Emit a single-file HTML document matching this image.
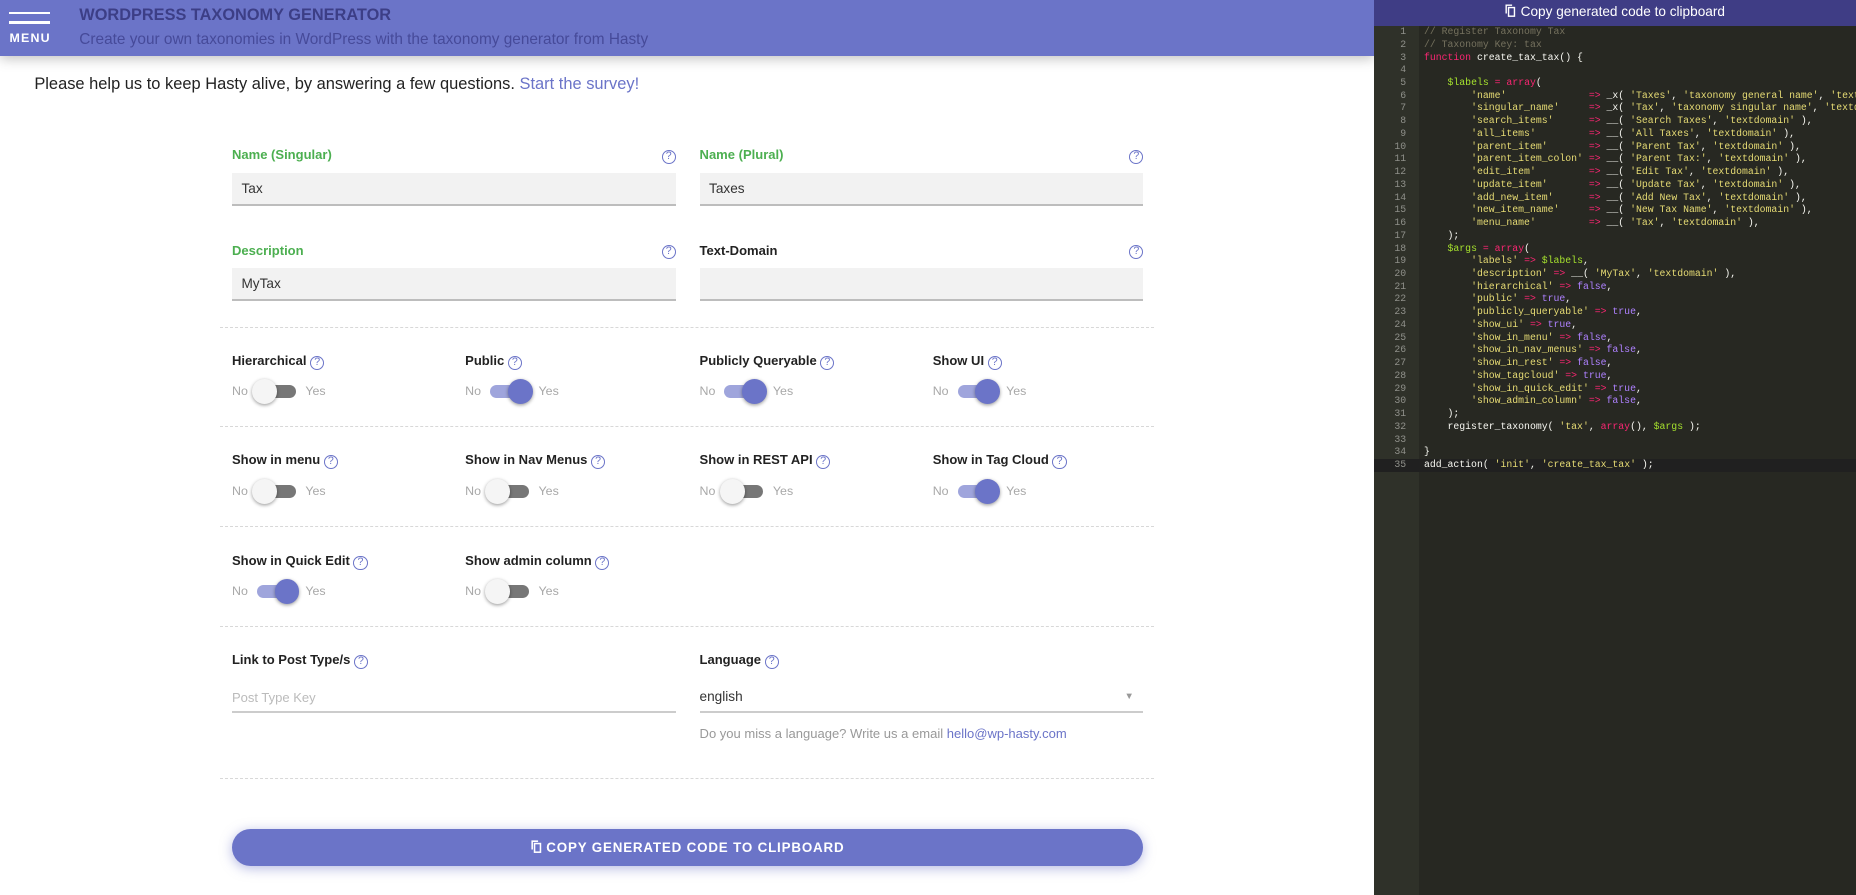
<!DOCTYPE html>
<html><head><meta charset="utf-8">
<style>
*{box-sizing:border-box;margin:0;padding:0}
html,body{width:1856px;height:895px;overflow:hidden;background:#fff}
#w{zoom:1.18367;width:1568px;height:756px;position:relative;font-family:"Liberation Sans",Arial,sans-serif;overflow:hidden}
.abs{position:absolute}
.hdr{left:0;top:0;width:1161px;height:47px;background:#6b74c8;box-shadow:0 2px 10px rgba(0,0,0,.25)}
.hb{left:8px;width:34px;height:2px;background:#fff}
.lbl{position:absolute;font-size:11px;font-weight:bold;color:#222;white-space:nowrap}
.g{color:#4caf50}
.q{display:inline-block;width:12px;height:12px;border:1px solid #6b74c8;border-radius:50%;color:#6b74c8;font-size:9px;line-height:10px;text-align:center;font-weight:normal;vertical-align:0px;margin-left:3px}
.inp{position:absolute;height:28px;background:#f2f2f2;border-bottom:2px solid #bdbdbd;font-size:11.5px;color:#333;padding:7px 8px}
.dash{position:absolute;left:186px;width:789px;border-top:1px dashed #d8d8d8}
.tg{position:absolute;font-size:10.5px;color:#a8a8a8;height:20px}
.tg .no{position:absolute;left:0;top:4px}
.tg .ye{position:absolute;left:62px;top:4px}
.tg .tr{position:absolute;left:21px;top:5px;width:33px;height:11px;border-radius:6px;background:#777}
.tg .kn{position:absolute;top:0;width:21px;height:21px;border-radius:50%;box-shadow:0 1px 3px rgba(0,0,0,.4)}
.off .kn{left:17px;background:#f5f5f5}
.on .tr{background:#9fa5dc}
.on .kn{left:36px;background:#6b74c8}
.code{left:1161px;top:0;width:407px;height:756px;background:#272822}
.gut{left:1161px;top:22px;width:38px;height:734px;background:#2f3129}
pre{position:absolute;left:1203px;top:22px;font-family:"Liberation Mono",monospace;font-size:8.3px;line-height:10.76px;color:#f8f8f2;white-space:pre}
.c{color:#75715e}.k{color:#f92672}.s{color:#e6db74}.v{color:#a6e22e}.p{color:#ae81ff}
</style></head><body><div id="w">
<div class="abs hdr"></div>
<div class="abs hb" style="top:10px"></div>
<div class="abs hb" style="top:18px"></div>
<div class="abs" style="left:8px;top:26px;font-size:10.5px;color:#fff;font-weight:bold;letter-spacing:1px">MENU</div>
<div class="abs" style="left:67px;top:5px;font-size:13.8px;font-weight:bold;color:#3c3e86">WORDPRESS TAXONOMY GENERATOR</div>
<div class="abs" style="left:67px;top:26px;font-size:13px;color:#464a99">Create your own taxonomies in WordPress with the taxonomy generator from Hasty</div>
<div class="abs" style="left:29px;top:63px;font-size:13.9px;color:#222">Please help us to keep Hasty alive, by answering a few questions. <span style="color:#6b74c8">Start the survey!</span></div>

<div class="lbl g" style="left:196px;top:124px">Name (Singular)</div><div class="abs" style="left:556px;top:121px"><span class="q">?</span></div>
<div class="lbl g" style="left:591px;top:124px">Name (Plural)</div><div class="abs" style="left:951px;top:121px"><span class="q">?</span></div>
<div class="inp" style="left:196px;top:146px;width:375px">Tax</div>
<div class="inp" style="left:591px;top:146px;width:375px">Taxes</div>
<div class="lbl g" style="left:196px;top:205px">Description</div><div class="abs" style="left:556px;top:201px"><span class="q">?</span></div>
<div class="lbl" style="left:591px;top:205px">Text-Domain</div><div class="abs" style="left:951px;top:201px"><span class="q">?</span></div>
<div class="inp" style="left:196px;top:226px;width:375px">MyTax</div>
<div class="inp" style="left:591px;top:226px;width:375px"></div>
<div class="dash" style="top:276px"></div>

<div class="lbl" style="left:196px;top:298px">Hierarchical<span class="q">?</span></div>
<div class="lbl" style="left:393px;top:298px">Public<span class="q">?</span></div>
<div class="lbl" style="left:591px;top:298px">Publicly Queryable<span class="q">?</span></div>
<div class="lbl" style="left:788px;top:298px">Show UI<span class="q">?</span></div>
<div class="tg off" style="left:196px;top:320px"><span class="no">No</span><div class="tr"></div><div class="kn"></div><span class="ye">Yes</span></div>
<div class="tg on" style="left:393px;top:320px"><span class="no">No</span><div class="tr"></div><div class="kn"></div><span class="ye">Yes</span></div>
<div class="tg on" style="left:591px;top:320px"><span class="no">No</span><div class="tr"></div><div class="kn"></div><span class="ye">Yes</span></div>
<div class="tg on" style="left:788px;top:320px"><span class="no">No</span><div class="tr"></div><div class="kn"></div><span class="ye">Yes</span></div>
<div class="dash" style="top:360px"></div>

<div class="lbl" style="left:196px;top:382px">Show in menu<span class="q">?</span></div>
<div class="lbl" style="left:393px;top:382px">Show in Nav Menus<span class="q">?</span></div>
<div class="lbl" style="left:591px;top:382px">Show in REST API<span class="q">?</span></div>
<div class="lbl" style="left:788px;top:382px">Show in Tag Cloud<span class="q">?</span></div>
<div class="tg off" style="left:196px;top:405px"><span class="no">No</span><div class="tr"></div><div class="kn"></div><span class="ye">Yes</span></div>
<div class="tg off" style="left:393px;top:405px"><span class="no">No</span><div class="tr"></div><div class="kn"></div><span class="ye">Yes</span></div>
<div class="tg off" style="left:591px;top:405px"><span class="no">No</span><div class="tr"></div><div class="kn"></div><span class="ye">Yes</span></div>
<div class="tg on" style="left:788px;top:405px"><span class="no">No</span><div class="tr"></div><div class="kn"></div><span class="ye">Yes</span></div>
<div class="dash" style="top:444px"></div>

<div class="lbl" style="left:196px;top:467px">Show in Quick Edit<span class="q">?</span></div>
<div class="lbl" style="left:393px;top:467px">Show admin column<span class="q">?</span></div>
<div class="tg on" style="left:196px;top:489px"><span class="no">No</span><div class="tr"></div><div class="kn"></div><span class="ye">Yes</span></div>
<div class="tg off" style="left:393px;top:489px"><span class="no">No</span><div class="tr"></div><div class="kn"></div><span class="ye">Yes</span></div>
<div class="dash" style="top:529px"></div>

<div class="lbl" style="left:196px;top:551px">Link to Post Type/s<span class="q">?</span></div>
<div class="lbl" style="left:591px;top:551px">Language<span class="q">?</span></div>
<div class="abs" style="left:196px;top:583px;font-size:11px;color:#bbb">Post Type Key</div>
<div class="abs" style="left:196px;top:601px;width:375px;border-top:2px solid #ccc"></div>
<div class="abs" style="left:591px;top:582px;font-size:11.5px;color:#333">english</div>
<div class="abs" style="left:950px;top:584px;font-size:8px;color:#999">▼</div>
<div class="abs" style="left:591px;top:601px;width:375px;border-top:2px solid #ccc"></div>
<div class="abs" style="left:591px;top:613px;font-size:11px;color:#999">Do you miss a language? Write us a email <span style="color:#6b74c8">hello@wp-hasty.com</span></div>
<div class="dash" style="top:657px"></div>

<div class="abs" style="left:196px;top:700px;width:770px;height:32px;border-radius:16px;background:#6b74c8;box-shadow:0 2px 10px rgba(107,116,200,.5);color:#fff;font-size:11.3px;font-weight:bold;text-align:center;line-height:32px;letter-spacing:.7px"><svg width="9" height="11" viewBox="0 0 9 11" style="vertical-align:-1px;margin-right:4px"><path d="M1 8V1h5" fill="none" stroke="#fff" stroke-width="1.3"/><rect x="3" y="3" width="5" height="7.3" fill="none" stroke="#fff" stroke-width="1.3"/></svg>COPY GENERATED CODE TO CLIPBOARD</div>

<div class="abs code"></div>
<div class="abs" style="left:1161px;top:0;width:407px;height:22px;background:#3f3d85;color:#fff;font-size:11.5px;text-align:center;line-height:20px"><svg width="9" height="11" viewBox="0 0 9 11" style="vertical-align:-1px;margin-right:4px"><path d="M1 8V1h5" fill="none" stroke="#fff" stroke-width="1.2"/><rect x="3" y="3" width="5" height="7.3" fill="none" stroke="#fff" stroke-width="1.2"/></svg>Copy generated code to clipboard</div>
<div class="abs gut"></div>
<div class="abs" style="left:1161px;top:388px;width:407px;height:10.76px;background:#202020"></div>
<pre style="left:1166px;width:22px;text-align:right;color:#8f908a">1
2
3
4
5
6
7
8
9
10
11
12
13
14
15
16
17
18
19
20
21
22
23
24
25
26
27
28
29
30
31
32
33
34
35</pre>
<pre><span class="c">// Register Taxonomy Tax</span>
<span class="c">// Taxonomy Key: tax</span>
<span class="k">function</span> create_tax_tax() {

    <span class="v">$labels</span> <span class="k">=</span> <span class="k">array</span>(
        <span class="s">'name'</span>              <span class="k">=&gt;</span> _x( <span class="s">'Taxes'</span>, <span class="s">'taxonomy general name'</span>, <span class="s">'textdomain'</span> ),
        <span class="s">'singular_name'</span>     <span class="k">=&gt;</span> _x( <span class="s">'Tax'</span>, <span class="s">'taxonomy singular name'</span>, <span class="s">'textdomain'</span> ),
        <span class="s">'search_items'</span>      <span class="k">=&gt;</span> __( <span class="s">'Search Taxes'</span>, <span class="s">'textdomain'</span> ),
        <span class="s">'all_items'</span>         <span class="k">=&gt;</span> __( <span class="s">'All Taxes'</span>, <span class="s">'textdomain'</span> ),
        <span class="s">'parent_item'</span>       <span class="k">=&gt;</span> __( <span class="s">'Parent Tax'</span>, <span class="s">'textdomain'</span> ),
        <span class="s">'parent_item_colon'</span> <span class="k">=&gt;</span> __( <span class="s">'Parent Tax:'</span>, <span class="s">'textdomain'</span> ),
        <span class="s">'edit_item'</span>         <span class="k">=&gt;</span> __( <span class="s">'Edit Tax'</span>, <span class="s">'textdomain'</span> ),
        <span class="s">'update_item'</span>       <span class="k">=&gt;</span> __( <span class="s">'Update Tax'</span>, <span class="s">'textdomain'</span> ),
        <span class="s">'add_new_item'</span>      <span class="k">=&gt;</span> __( <span class="s">'Add New Tax'</span>, <span class="s">'textdomain'</span> ),
        <span class="s">'new_item_name'</span>     <span class="k">=&gt;</span> __( <span class="s">'New Tax Name'</span>, <span class="s">'textdomain'</span> ),
        <span class="s">'menu_name'</span>         <span class="k">=&gt;</span> __( <span class="s">'Tax'</span>, <span class="s">'textdomain'</span> ),
    );
    <span class="v">$args</span> <span class="k">=</span> <span class="k">array</span>(
        <span class="s">'labels'</span> <span class="k">=&gt;</span> <span class="v">$labels</span>,
        <span class="s">'description'</span> <span class="k">=&gt;</span> __( <span class="s">'MyTax'</span>, <span class="s">'textdomain'</span> ),
        <span class="s">'hierarchical'</span> <span class="k">=&gt;</span> <span class="p">false</span>,
        <span class="s">'public'</span> <span class="k">=&gt;</span> <span class="p">true</span>,
        <span class="s">'publicly_queryable'</span> <span class="k">=&gt;</span> <span class="p">true</span>,
        <span class="s">'show_ui'</span> <span class="k">=&gt;</span> <span class="p">true</span>,
        <span class="s">'show_in_menu'</span> <span class="k">=&gt;</span> <span class="p">false</span>,
        <span class="s">'show_in_nav_menus'</span> <span class="k">=&gt;</span> <span class="p">false</span>,
        <span class="s">'show_in_rest'</span> <span class="k">=&gt;</span> <span class="p">false</span>,
        <span class="s">'show_tagcloud'</span> <span class="k">=&gt;</span> <span class="p">true</span>,
        <span class="s">'show_in_quick_edit'</span> <span class="k">=&gt;</span> <span class="p">true</span>,
        <span class="s">'show_admin_column'</span> <span class="k">=&gt;</span> <span class="p">false</span>,
    );
    register_taxonomy( <span class="s">'tax'</span>, <span class="k">array</span>(), <span class="v">$args</span> );

}
add_action( <span class="s">'init'</span>, <span class="s">'create_tax_tax'</span> );</pre>
</div></body></html>
